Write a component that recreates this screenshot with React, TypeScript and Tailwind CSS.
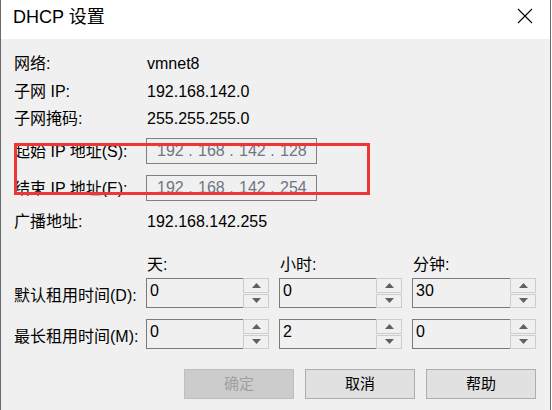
import React from "react"

const font = { fontFamily: '"Liberation Sans", "Noto Sans CJK SC", sans-serif' }

const Arrow = ({ up }: { up?: boolean }) => (
  <svg width="9" height="5" viewBox="0 0 9 5">
    <path d={up ? "M0 5 L4.5 0 L9 5 Z" : "M0 0 L4.5 5 L9 0 Z"} fill="#606060" />
  </svg>
)

const Spin = ({ value, w }: { value: string; w: string }) => (
  <div className={`flex h-[30px] ${w}`}>
    <div className="flex-1 border border-r-0 border-[#7a7a7a] pl-[3px] text-[16px] leading-[24px] text-black">
      {value}
    </div>
    <div className="flex w-[26px] flex-col gap-[1px]">
      <div className="flex h-[15px] items-center justify-center border border-[#cdcdcd]">
        <Arrow up />
      </div>
      <div className="flex flex-1 items-center justify-center border border-[#cdcdcd]">
        <Arrow />
      </div>
    </div>
  </div>
)

const IpBox = ({ parts }: { parts: string[] }) => (
  <div className="flex h-[26px] w-[171px] items-center border border-[#7f7f7f] pl-[10px] text-[16px] text-[#6f7682]">
    {parts.map((p, i) => (
      <React.Fragment key={i}>
        {i > 0 && <span className="w-[15px] text-center">.</span>}
        <span className="w-[26px]">{p}</span>
      </React.Fragment>
    ))}
  </div>
)

const Row = ({ label, value, h }: { label: string; value: string; h: string }) => (
  <div className={`flex items-center ${h}`}>
    <div className="w-[133px]">{label}</div>
    <div>{value}</div>
  </div>
)

export default function App() {
  return (
    <div
      className="relative h-[410px] w-[551px] overflow-hidden border-x border-[#6a6a6a] bg-[#f0f0f0] text-[16px] text-black"
      style={font}
    >
      {/* title bar */}
      <div className="flex h-[39px] items-start justify-between bg-white pr-[17px]">
        <div className="pl-[12px] pt-[5px] text-[18px] leading-[24px]">DHCP 设置</div>
        <svg className="mt-[8px]" width="16" height="16" viewBox="0 0 16 16">
          <path d="M1 1 L15 15 M15 1 L1 15" stroke="#000" strokeWidth="1.1" />
        </svg>
      </div>

      <div className="pl-[13px] pt-[11px]">
        <Row label="网络:" value="vmnet8" h="h-[28px]" />
        <Row label="子网 IP:" value="192.168.142.0" h="h-[27px]" />
        <Row label="子网掩码:" value="255.255.255.0" h="h-[28px]" />

        <div className="mt-[4px] flex items-center">
          <div className="w-[132px] pt-[3px]">起始 IP 地址(S):</div>
          <IpBox parts={["192", "168", "142", "128"]} />
        </div>
        <div className="mt-[10px] flex items-center">
          <div className="w-[132px] pt-[3px]">结束 IP 地址(E):</div>
          <IpBox parts={["192", "168", "142", "254"]} />
        </div>

        <div className="mt-[8px]">
          <Row label="广播地址:" value="192.168.142.255" h="h-[26px]" />
        </div>

        {/* lease times */}
        <div className="mt-[20px] flex h-[20px] items-center">
          <div className="w-[132px]" />
          <div className="w-[133px] pl-[1px]">天:</div>
          <div className="w-[133px] pl-[1px]">小时:</div>
          <div className="pl-[1px]">分钟:</div>
        </div>
        <div className="mt-[2px] flex items-center gap-[10px]">
          <div className="-mr-[10px] w-[132px] pt-[7px]">默认租用时间(D):</div>
          <Spin value="0" w="w-[123px]" />
          <Spin value="0" w="w-[123px]" />
          <Spin value="30" w="w-[124px]" />
        </div>
        <div className="mt-[10px] flex items-center gap-[10px]">
          <div className="-mr-[10px] w-[132px] pt-[7px]">最长租用时间(M):</div>
          <Spin value="0" w="w-[123px]" />
          <Spin value="2" w="w-[123px]" />
          <Spin value="0" w="w-[124px]" />
        </div>
      </div>

      {/* buttons */}
      <div className="mt-[20px] flex justify-end gap-[11px] pr-[14px] text-[15px]">
        <div className="flex h-[30px] w-[110px] items-center justify-center border border-[#bfbfbf] bg-[#cccccc] text-[#a0a0a0]">
          确定
        </div>
        <div className="flex h-[30px] w-[110px] items-center justify-center border border-[#adadad] bg-[#e1e1e1]">
          取消
        </div>
        <div className="flex h-[30px] w-[110px] items-center justify-center border border-[#adadad] bg-[#e1e1e1]">
          帮助
        </div>
      </div>

      {/* red annotation */}
      <div className="absolute left-[13px] top-[143px] h-[52px] w-[356px] border-[3px] border-[#ee3636]" />
    </div>
  )
}
